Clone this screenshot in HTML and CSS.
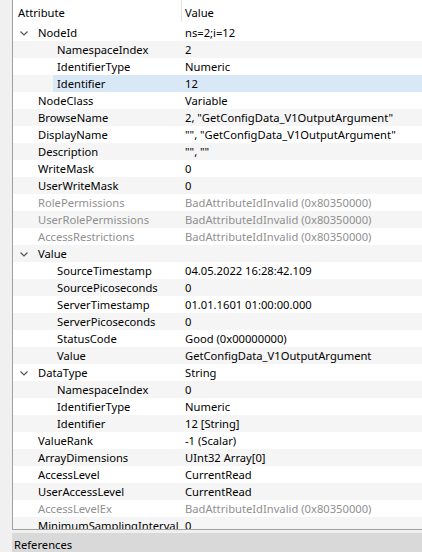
FILE: index.html
```html
<!DOCTYPE html>
<html>
<head>
<meta charset="utf-8">
<link rel="stylesheet" href="styles.css">
</head>
<body>
<div class="app">
  <div class="tree">
    <div class="head">
      <div class="hcell hattr">Attribute</div>
      <div class="hcell hval">Value</div>
    </div>
    <div class="rows">
      <div class="row l0"><span class="ind"><svg class="chev" width="8" height="5" viewBox="0 0 8 5"><path d="M0.5 0.5 L4 4 L7.5 0.5" fill="none" stroke="#555" stroke-width="1.2"/></svg></span><div class="body"><span class="name">NodeId</span><span class="val">ns=2;i=12</span></div></div>
      <div class="row l1"><span class="ind"></span><div class="body"><span class="name">NamespaceIndex</span><span class="val">2</span></div></div>
      <div class="row l1"><span class="ind"></span><div class="body"><span class="name">IdentifierType</span><span class="val">Numeric</span></div></div>
      <div class="row l1 sel"><span class="ind"></span><div class="body"><span class="name">Identifier</span><span class="val">12</span></div></div>
      <div class="row l0"><span class="ind"></span><div class="body"><span class="name">NodeClass</span><span class="val">Variable</span></div></div>
      <div class="row l0"><span class="ind"></span><div class="body"><span class="name">BrowseName</span><span class="val">2, "GetConfigData_V1OutputArgument"</span></div></div>
      <div class="row l0"><span class="ind"></span><div class="body"><span class="name">DisplayName</span><span class="val">"", "GetConfigData_V1OutputArgument"</span></div></div>
      <div class="row l0"><span class="ind"></span><div class="body"><span class="name">Description</span><span class="val">"", ""</span></div></div>
      <div class="row l0"><span class="ind"></span><div class="body"><span class="name">WriteMask</span><span class="val">0</span></div></div>
      <div class="row l0"><span class="ind"></span><div class="body"><span class="name">UserWriteMask</span><span class="val">0</span></div></div>
      <div class="row l0 dis"><span class="ind"></span><div class="body"><span class="name">RolePermissions</span><span class="val">BadAttributeIdInvalid (0x80350000)</span></div></div>
      <div class="row l0 dis"><span class="ind"></span><div class="body"><span class="name">UserRolePermissions</span><span class="val">BadAttributeIdInvalid (0x80350000)</span></div></div>
      <div class="row l0 dis"><span class="ind"></span><div class="body"><span class="name">AccessRestrictions</span><span class="val">BadAttributeIdInvalid (0x80350000)</span></div></div>
      <div class="row l0"><span class="ind"><svg class="chev" width="8" height="5" viewBox="0 0 8 5"><path d="M0.5 0.5 L4 4 L7.5 0.5" fill="none" stroke="#555" stroke-width="1.2"/></svg></span><div class="body"><span class="name">Value</span><span class="val"></span></div></div>
      <div class="row l1"><span class="ind"></span><div class="body"><span class="name">SourceTimestamp</span><span class="val">04.05.2022 16:28:42.109</span></div></div>
      <div class="row l1"><span class="ind"></span><div class="body"><span class="name">SourcePicoseconds</span><span class="val">0</span></div></div>
      <div class="row l1"><span class="ind"></span><div class="body"><span class="name">ServerTimestamp</span><span class="val">01.01.1601 01:00:00.000</span></div></div>
      <div class="row l1"><span class="ind"></span><div class="body"><span class="name">ServerPicoseconds</span><span class="val">0</span></div></div>
      <div class="row l1"><span class="ind"></span><div class="body"><span class="name">StatusCode</span><span class="val">Good (0x00000000)</span></div></div>
      <div class="row l1"><span class="ind"></span><div class="body"><span class="name">Value</span><span class="val">GetConfigData_V1OutputArgument</span></div></div>
      <div class="row l0"><span class="ind"><svg class="chev" width="8" height="5" viewBox="0 0 8 5"><path d="M0.5 0.5 L4 4 L7.5 0.5" fill="none" stroke="#555" stroke-width="1.2"/></svg></span><div class="body"><span class="name">DataType</span><span class="val">String</span></div></div>
      <div class="row l1"><span class="ind"></span><div class="body"><span class="name">NamespaceIndex</span><span class="val">0</span></div></div>
      <div class="row l1"><span class="ind"></span><div class="body"><span class="name">IdentifierType</span><span class="val">Numeric</span></div></div>
      <div class="row l1"><span class="ind"></span><div class="body"><span class="name">Identifier</span><span class="val">12 [String]</span></div></div>
      <div class="row l0"><span class="ind"></span><div class="body"><span class="name">ValueRank</span><span class="val">-1 (Scalar)</span></div></div>
      <div class="row l0"><span class="ind"></span><div class="body"><span class="name">ArrayDimensions</span><span class="val">UInt32 Array[0]</span></div></div>
      <div class="row l0"><span class="ind"></span><div class="body"><span class="name">AccessLevel</span><span class="val">CurrentRead</span></div></div>
      <div class="row l0"><span class="ind"></span><div class="body"><span class="name">UserAccessLevel</span><span class="val">CurrentRead</span></div></div>
      <div class="row l0 dis"><span class="ind"></span><div class="body"><span class="name">AccessLevelEx</span><span class="val">BadAttributeIdInvalid (0x80350000)</span></div></div>
      <div class="row l0"><span class="ind"></span><div class="body"><span class="name">MinimumSamplingInterval</span><span class="val">0</span></div></div>
    </div>
  </div>
  <div class="refs">References</div>
</div>
</body>
</html>
```
FILE: styles.css
```css
html, body {
  margin: 0;
  padding: 0;
}
body {
  background: #f0f0f0;
  font-family: "Noto Sans", "Open Sans", sans-serif;
  font-size: 11.2px;
  color: #000;
  width: 422px;
  height: 552px;
  overflow: hidden;
}
.app {
  padding-left: 12px;
  display: flex;
  flex-direction: column;
}
.tree {
  height: 529px;
  background: #fff;
  border-left: 1px solid #a0a0a0;
  border-bottom: 1px solid #a0a0a0;
  overflow: hidden;
}
.head {
  display: flex;
  height: 24px;
  align-items: flex-start;
}
.hcell {
  height: 22px;
  line-height: 26px;
  box-sizing: border-box;
}
.hattr {
  width: 169px;
  padding-left: 5px;
  border-right: 1px solid #e3e3e3;
}
.hval {
  padding-left: 3px;
}
.row {
  display: flex;
  height: 17px;
  line-height: 17px;
  white-space: nowrap;
}
.rows .row:nth-child(even) {
  background: #f5f5f5;
}
.ind {
  flex: 0 0 auto;
  position: relative;
}
.l0 .ind { width: 21px; }
.l1 .ind { width: 40px; }
.chev {
  position: absolute;
  left: 7px;
  top: 7px;
}
.body {
  flex: 1;
  display: flex;
  padding-left: 4px;
}
.name {
  flex: 0 0 auto;
}
.l0 .name { width: 147px; }
.l1 .name { width: 128px; }
.val {
  flex: 1;
}
.sel .body {
  background: #d9e8f6;
}
.dis {
  color: #909090;
}
.refs {
  margin-top: 3px;
  height: 24px;
  line-height: 24px;
  background: #d9d9d9;
  padding-left: 2px;
}
```
